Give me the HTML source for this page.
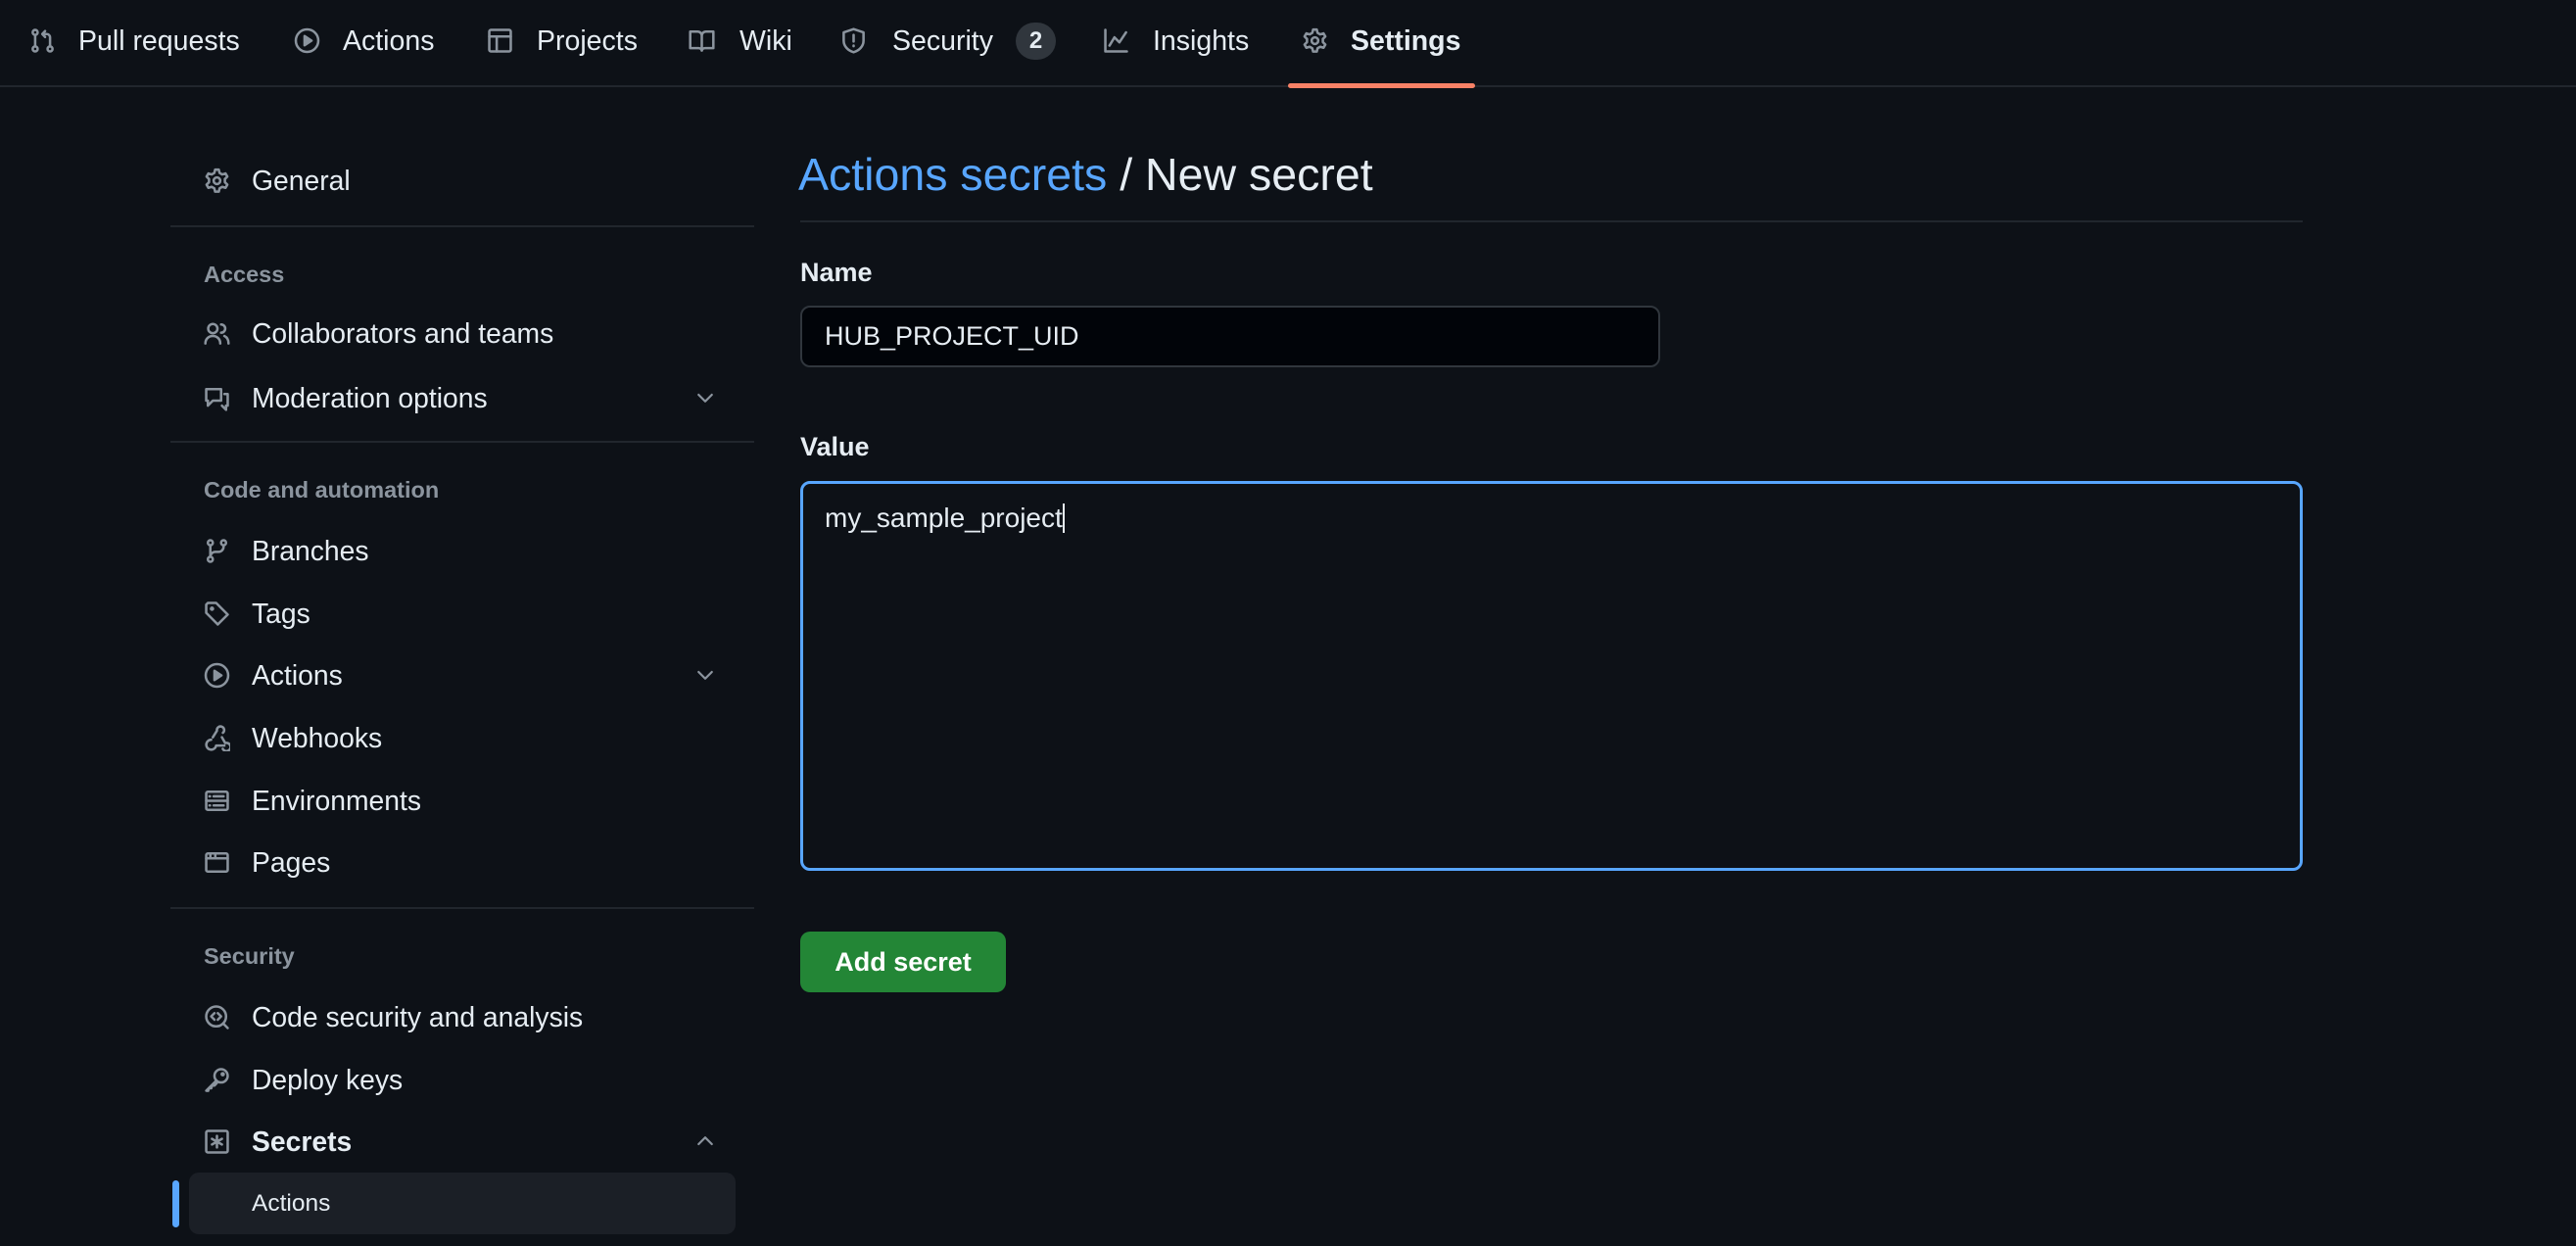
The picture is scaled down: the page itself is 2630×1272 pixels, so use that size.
<!DOCTYPE html>
<html><head><meta charset="utf-8"><style>
*{margin:0;padding:0;box-sizing:border-box}
body{width:2630px;height:1272px;background:#0d1117;font-family:"Liberation Sans",Arial,sans-serif;color:#e6edf3;position:relative;overflow:hidden}
.a{position:absolute;display:flex;align-items:center;height:44px;white-space:nowrap}
svg{fill:none;stroke:#8b949e;stroke-width:1.5;stroke-linecap:round;stroke-linejoin:round}
.nav{font-size:28.5px;color:#e6edf3}
.ni{position:absolute;top:28px;width:27px;height:27px}
.si{font-size:28.3px;left:208px}
.si svg{width:27px;height:27px;margin-right:22px}
.h{font-size:23.5px;font-weight:bold;color:#8b949e;left:208px}
.dv{position:absolute;left:174px;width:596px;height:2px;background:#21262d}
.chev{position:absolute;left:708px;width:24px;height:24px}
</style></head><body>
<div style="position:absolute;left:0;top:87px;width:2630px;height:2px;background:#21262d"></div>
<div style="position:absolute;left:1315px;top:85px;width:191px;height:5px;background:#f78166;border-radius:3px"></div>

<svg class="ni" style="left:30px" viewBox="0 0 16 16"><circle cx="3.5" cy="3" r="1.5"/><circle cx="3.5" cy="13" r="1.5"/><path d="M3.5 4.5v7"/><circle cx="12.5" cy="13" r="1.5"/><path d="M12.5 11.5V6a2 2 0 0 0-2-2H8M9.5 2.2L7.8 4l1.7 1.8"/></svg>
<div class="a nav" style="left:80px;top:20px">Pull requests</div>
<svg class="ni" style="left:300px" viewBox="0 0 16 16"><circle cx="8" cy="8" r="6.8"/><path d="M6.5 5.2v5.6L10.7 8z" fill="#8b949e"/></svg>
<div class="a nav" style="left:350px;top:20px">Actions</div>
<svg class="ni" style="left:497px" viewBox="0 0 16 16"><rect x="1.5" y="1.5" width="13" height="13" rx="1"/><path d="M1.5 5.5h13M6 5.5v9"/></svg>
<div class="a nav" style="left:548px;top:20px">Projects</div>
<svg class="ni" style="left:703px" viewBox="0 0 16 16"><path d="M1 2.5h4.5A2.5 2.5 0 0 1 8 5v9a2 2 0 0 0-2-1.5H1zM15 2.5h-4.5A2.5 2.5 0 0 0 8 5v9a2 2 0 0 1 2-1.5H15z"/></svg>
<div class="a nav" style="left:755px;top:20px">Wiki</div>
<svg class="ni" style="left:858px" viewBox="0 0 16 16"><path d="M8 1l6 2v5c0 3.5-2.7 6-6 7-3.3-1-6-3.5-6-7V3z"/><path d="M8 4.5v4M8 11v.3"/></svg>
<div class="a nav" style="left:911px;top:20px">Security</div>
<div style="position:absolute;left:1037px;top:23px;width:41px;height:38px;border-radius:19px;background:#30363d;font-size:24px;font-weight:bold;display:flex;align-items:center;justify-content:center">2</div>
<svg class="ni" style="left:1126px" viewBox="0 0 16 16"><path d="M1.5 1.5v13h13M4 11l3-5 3 3 4-6"/></svg>
<div class="a nav" style="left:1177px;top:20px">Insights</div>
<svg class="ni" style="left:1329px" viewBox="0 0 16 16"><circle cx="8" cy="8" r="2"/><path d="M6.9 1.3h2.2l.5 2 1.6.9 2-.6 1.1 1.9-1.5 1.5v1.9l1.5 1.5-1.1 1.9-2-.6-1.6.9-.5 2H6.9l-.5-2-1.6-.9-2 .6-1.1-1.9 1.5-1.5V7L1.7 5.5l1.1-1.9 2 .6 1.6-.9z"/></svg>
<div class="a nav" style="left:1379px;top:20px;font-weight:bold">Settings</div>

<div class="a si" style="top:162px"><svg viewBox="0 0 16 16"><circle cx="8" cy="8" r="2"/><path d="M6.9 1.3h2.2l.5 2 1.6.9 2-.6 1.1 1.9-1.5 1.5v1.9l1.5 1.5-1.1 1.9-2-.6-1.6.9-.5 2H6.9l-.5-2-1.6-.9-2 .6-1.1-1.9 1.5-1.5V7L1.7 5.5l1.1-1.9 2 .6 1.6-.9z"/></svg>General</div>
<div class="dv" style="top:230px"></div>
<div class="a h" style="top:258px">Access</div>
<div class="a si" style="top:318px"><svg viewBox="0 0 16 16"><circle cx="5.5" cy="5" r="2.8"/><path d="M1 14c0-2.8 2-4.5 4.5-4.5S10 11.2 10 14M10.5 2.5a2.5 2.5 0 0 1 0 5M12.5 9.5c1.5.7 2.5 2.3 2.5 4.5"/></svg>Collaborators and teams</div>
<div class="a si" style="top:384px"><svg viewBox="0 0 16 16"><path d="M1.5 2.5h9v7h-5l-3 3v-3h-1zM12.5 5.5h2v7h-1v2.5l-2.5-2.5"/></svg>Moderation options</div>
<svg class="chev" style="top:394px" viewBox="0 0 16 16"><path d="M3.5 6l4.5 4.5L12.5 6"/></svg>
<div class="dv" style="top:450px"></div>
<div class="a h" style="top:478px">Code and automation</div>
<div class="a si" style="top:540px"><svg viewBox="0 0 16 16"><circle cx="4" cy="3" r="1.5"/><circle cx="4" cy="13" r="1.5"/><circle cx="12" cy="3" r="1.5"/><path d="M4 4.5v7M12 4.5v1a3 3 0 0 1-3 3H7a3 3 0 0 0-3 3"/></svg>Branches</div>
<div class="a si" style="top:604px"><svg viewBox="0 0 16 16"><path d="M1.5 2.5v5l7 7 6-6-7-7h-5z"/><circle cx="5" cy="5" r=".6" fill="#8b949e"/></svg>Tags</div>
<div class="a si" style="top:667px"><svg viewBox="0 0 16 16"><circle cx="8" cy="8" r="6.8"/><path d="M6.5 5.2v5.6L10.7 8z" fill="#8b949e"/></svg>Actions</div>
<svg class="chev" style="top:677px" viewBox="0 0 16 16"><path d="M3.5 6l4.5 4.5L12.5 6"/></svg>
<div class="a si" style="top:731px"><svg viewBox="0 0 16 16"><path d="M5.5 7.5L8 3.5a2.2 2.2 0 1 1 3.6 1.3M4.5 9a3 3 0 1 0 3 3.5h5M11 7.5l2 3.5a2.5 2.5 0 1 1-1.5 3.5"/></svg>Webhooks</div>
<div class="a si" style="top:795px"><svg viewBox="0 0 16 16"><rect x="1.5" y="2.5" width="13" height="11" rx="1"/><path d="M1.5 8h13M6 5.3h6M6 10.8h6M3.5 5.3h.3M3.5 10.8h.3"/></svg>Environments</div>
<div class="a si" style="top:858px"><svg viewBox="0 0 16 16"><rect x="1.5" y="2.5" width="13" height="11" rx="1"/><path d="M1.5 5.5h13M4 2.5v3M7 2.5v3"/></svg>Pages</div>
<div class="dv" style="top:926px"></div>
<div class="a h" style="top:954px">Security</div>
<div class="a si" style="top:1016px"><svg viewBox="0 0 16 16"><circle cx="7.5" cy="7.5" r="6"/><path d="M11.8 11.8l2.7 2.7M6.5 5.5l-2 2 2 2M8.5 5.5l2 2-2 2"/></svg>Code security and analysis</div>
<div class="a si" style="top:1080px"><svg viewBox="0 0 16 16"><circle cx="10.5" cy="5.5" r="4"/><path d="M7.7 8.3L1.5 14.5v0l1.2.1.3-1.6h1.6l.3-1.6h1.6l1.5-1.6"/><circle cx="11.5" cy="4.5" r=".6" fill="#8b949e"/></svg>Deploy keys</div>
<div class="a si" style="top:1143px;font-weight:bold"><svg viewBox="0 0 16 16"><rect x="1.5" y="1.5" width="13" height="13" rx="1"/><path d="M8 4.5v7M5 6.3l6 3.4M11 6.3L5 9.7"/></svg>Secrets</div>
<svg class="chev" style="top:1153px" viewBox="0 0 16 16"><path d="M3.5 10l4.5-4.5L12.5 10"/></svg>
<div style="position:absolute;left:176px;top:1205px;width:7px;height:48px;background:#58a6ff;border-radius:4px"></div>
<div style="position:absolute;left:193px;top:1197px;width:558px;height:63px;background:#1b1f26;border-radius:10px"></div>
<div class="a" style="left:257px;top:1207px;font-size:24.5px">Actions</div>

<div class="a" style="left:815px;top:148px;height:60px;font-size:46.5px;color:#e6edf3"><span style="color:#58a6ff">Actions secrets</span>&nbsp;/ New secret</div>
<div style="position:absolute;left:817px;top:225px;width:1534px;height:2px;background:#21262d"></div>
<div class="a" style="left:817px;top:256px;font-size:27px;font-weight:bold">Name</div>
<div style="position:absolute;left:817px;top:312px;width:878px;height:63px;background:#010409;border:2px solid #30363d;border-radius:10px;display:flex;align-items:center;padding-left:23px;font-size:27px">HUB_PROJECT_UID</div>
<div class="a" style="left:817px;top:434px;font-size:27px;font-weight:bold">Value</div>
<div style="position:absolute;left:817px;top:491px;width:1534px;height:398px;background:#0d1117;border:3px solid #58a6ff;border-radius:10px;padding:19px 0 0 22px;font-size:28px">my_sample_project<span style="display:inline-block;width:2px;height:30px;background:#e6edf3;vertical-align:-6px"></span></div>
<div style="position:absolute;left:817px;top:951px;width:210px;height:62px;background:#238636;border-radius:10px;display:flex;align-items:center;justify-content:center;font-size:27px;font-weight:bold;color:#fff">Add secret</div>
</body></html>
